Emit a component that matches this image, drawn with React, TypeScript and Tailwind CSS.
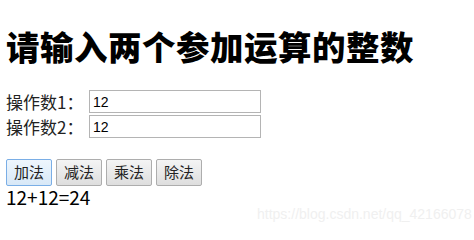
export default function App() {
  const ops = ['加法', '减法', '乘法', '除法']

  return (
    <div
      className="relative h-[229px] w-[474px] overflow-hidden bg-white px-[6px] text-[#111]"
      style={{ fontFamily: '"Noto Sans CJK SC", "Noto Sans", sans-serif' }}
    >
      <h1 className="mt-[24px] text-[33.5px] font-black leading-[44px] tracking-[0.5px] text-black">
        请输入两个参加运算的整数
      </h1>

      <div className="mt-[22px] flex flex-col gap-[2px]">
        {['操作数1：', '操作数2：'].map(label => (
          <div key={label} className="flex h-[23px] items-center">
            <span className="w-[83px] text-[17px] leading-[23px] text-[#222]">{label}</span>
            <input
              defaultValue="12"
              className="h-[23px] w-[172px] border border-[#b4b4b4] bg-white px-[3px] text-[14px] text-black outline-none"
              style={{ fontFamily: '"Liberation Sans", Arial, sans-serif' }}
            />
          </div>
        ))}
      </div>

      <div className="mt-[21px] flex gap-[4px]">
        {ops.map((op, i) => (
          <button
            key={op}
            className={
              i === 0
                ? 'h-[27px] w-[46px] rounded-[2px] border border-[#7aaee6] bg-gradient-to-b from-[#eef6fd] to-[#d8e8f7] text-[15px] text-[#222]'
                : 'h-[27px] w-[46px] rounded-[2px] border border-[#adadad] bg-gradient-to-b from-[#f4f4f4] to-[#dedede] text-[15px] text-[#222]'
            }
          >
            {op}
          </button>
        ))}
      </div>

      <p className="text-[19px] leading-[22px] text-black">12+12=24</p>

      <span
        className="absolute left-[257px] top-[204px] text-[14px] text-[#f0f0f0]"
        style={{ fontFamily: '"Liberation Sans", Arial, sans-serif' }}
      >
        https://blog.csdn.net/qq_42166078
      </span>
    </div>
  )
}
